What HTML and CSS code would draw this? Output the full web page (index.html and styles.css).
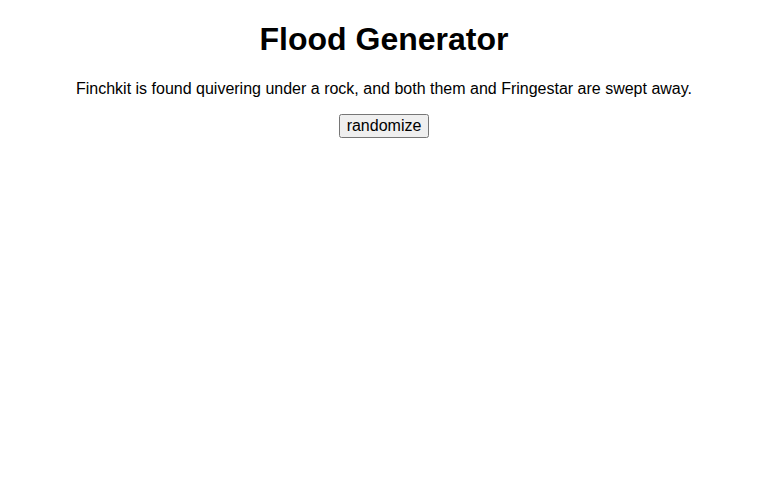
FILE: index.html
```html
<!DOCTYPE html>
<html lang="en">
<head>
  <meta charset="UTF-8" />
  <title>Flood Generator</title>
  <link rel="stylesheet" href="styles.css">
</head>
<body>

<div class="generator">
  <h1>Flood Generator</h1>
  <p id="output">Finchkit is found quivering under a rock, and both them and Fringestar are swept away.</p>
  <button id="randomize">randomize</button>
</div>

<script>
  // cats and outcomes for the flood event
  const cats = ["Finchkit", "Fringestar", "Mosspaw", "Ashfur", "Reedwhisker", "Brightheart"];
  const outcomes = [
    (a, b) => a + " is found quivering under a rock, and both them and " + b + " are swept away.",
    (a, b) => a + " drags " + b + " out of the rising water just in time.",
    (a, b) => a + " and " + b + " climb a tree and wait for the flood to pass."
  ];

  const output = document.getElementById('output');
  const button = document.getElementById('randomize');

  function pick(list) {
    return list[Math.floor(Math.random() * list.length)];
  }

  button.addEventListener('click', () => {
    const a = pick(cats);
    let b = pick(cats);
    while (b === a) b = pick(cats);
    output.textContent = pick(outcomes)(a, b);
  });
</script>
</body>
</html>
```

FILE: styles.css
```css
body {
  margin: 0;
  font-family: "Liberation Sans", Arial, sans-serif;
  background-color: #fff;
  color: #000;
}

/* centred column of title, text and button */
.generator {
  text-align: center;
}

.generator button {
  font-family: "Liberation Sans", Arial, sans-serif;
  font-size: 16px;
}
```
